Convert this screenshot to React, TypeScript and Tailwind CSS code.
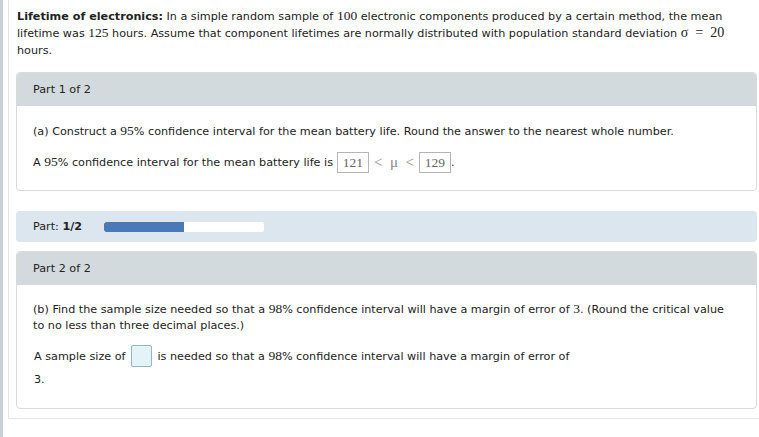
const sans = 'font-["DejaVu_Sans","Verdana",sans-serif]';
const serif = 'font-["Liberation_Serif","Times_New_Roman",serif]';

function Num({ children }: { children: React.ReactNode }) {
  return <span className={`${serif} text-[13.5px] leading-none`}>{children}</span>;
}

function AnswerBox({ value }: { value: string }) {
  return (
    <span
      className={`${serif} inline-flex h-[21px] w-[32px] items-center justify-center border border-[#b5b5b5] bg-white text-[13.5px] leading-none text-[#666]`}
    >
      {value}
    </span>
  );
}

function PartHeader({ label }: { label: string }) {
  return (
    <div className="flex h-[33px] items-center rounded-t-[4px] bg-[#d3dadd] px-[16px] text-[#222]">
      {label}
    </div>
  );
}

export default function App() {
  return (
    <div className={`${sans} flex min-h-[437px] bg-white text-[11.2px] leading-[17px] text-[#222]`}>
      <div className="w-[3px] shrink-0 bg-[#c9d0d7]" />
      <div className="ml-[5px] h-[419px] flex-1 border-b border-l border-[#e4e4e4] pl-[7px] pr-[2px]">
        <p className="pl-[1px] pr-[10px] pt-[8px] leading-[17px]">
          <b className="font-bold">Lifetime of electronics:</b> In a simple random sample of <Num>100</Num> electronic
          components produced by a certain method, the mean lifetime was <Num>125</Num> hours. Assume that component
          lifetimes are normally distributed with population standard deviation{' '}
          <span className={`${serif} text-[14px] leading-none`}>σ&nbsp; = &nbsp;20</span> hours.
        </p>

        <div className="mt-[13px] rounded-[4px] border border-[#dadada]">
          <PartHeader label="Part 1 of 2" />
          <div className="px-[16px] pb-[17px] pt-[17px]">
            <p className="leading-[17px]">
              (a) Construct a <Num>95</Num>% confidence interval for the mean battery life. Round the answer to the
              nearest whole number.
            </p>
            <div className="mt-[12px] flex items-center">
              <span>
                A <Num>95</Num>% confidence interval for the mean battery life is
              </span>
              <span className="ml-[4px]">
                <AnswerBox value="121" />
              </span>
              <span className={`${serif} mx-[5px] text-[15px] leading-none text-[#888]`}>&lt;&nbsp;&nbsp;μ&nbsp;&nbsp;&lt;</span>
              <AnswerBox value="129" />
              <span>.</span>
            </div>
          </div>
        </div>

        <div className="mt-[20px] flex h-[31px] items-center rounded-[4px] bg-[#dce6ef] pl-[17px]">
          <span className="w-[71px]">
            Part: <b className="font-bold">1/2</b>
          </span>
          <div className="flex h-[10px] w-[160px] overflow-hidden rounded-[2px] bg-white">
            <div className="h-full w-[80px] rounded-l-[2px] bg-[#4a79b6]" />
          </div>
        </div>

        <div className="mt-[9px] rounded-[4px] border border-[#dadada]">
          <PartHeader label="Part 2 of 2" />
          <div className="px-[16px] pb-[20px] pt-[17px]">
            <p className="pr-[14px] leading-[16px]">
              (b) Find the sample size needed so that a <Num>98</Num>% confidence interval will have a margin of error
              of <Num>3</Num>. (Round the critical value to no less than three decimal places.)
            </p>
            <div className="mt-[11px] flex items-center">
              <span className="pl-[1px]">A sample size of</span>
              <span className="ml-[6px] mr-[5px] inline-block h-[22px] w-[21px] rounded-[2px] border border-[#8fb7c4] bg-[#e3f3f8]" />
              <span>
                is needed so that a <Num>98</Num>% confidence interval will have a margin of error of
              </span>
            </div>
            <p className="mt-[4px] pl-[1px] leading-[17px]">3.</p>
          </div>
        </div>
      </div>
    </div>
  );
}
